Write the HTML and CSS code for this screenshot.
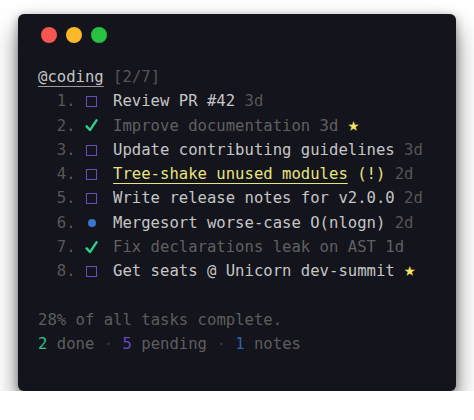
FILE: index.html
```html
<!DOCTYPE html>
<html>
<head>
<meta charset="utf-8">
<link rel="stylesheet" href="styles.css">
</head>
<body>
<div class="window">
  <div class="lights">
    <span class="light red"></span>
    <span class="light yellow"></span>
    <span class="light green"></span>
  </div>
  <div class="term">
    <div class="line"><span class="tag">@coding</span> <span class="dim">[2/7]</span></div>

    <div class="row"><span class="num">1.</span><span class="icon"><span class="box"></span></span><span class="text">Review PR #42 <span class="dim">3d</span></span></div>
    <div class="row done"><span class="num">2.</span><span class="icon"><svg class="check" viewBox="0 0 12 12"><path d="M1.5 6.8 L4.6 10.2 L10.6 1.2"/></svg></span><span class="text">Improve documentation 3d <span class="star">★</span></span></div>
    <div class="row"><span class="num">3.</span><span class="icon"><span class="box"></span></span><span class="text">Update contributing guidelines <span class="dim">3d</span></span></div>
    <div class="row"><span class="num">4.</span><span class="icon"><span class="box"></span></span><span class="text"><span class="hl"><span class="ul">Tree-shake unused modules</span> (!)</span> <span class="dim">2d</span></span></div>
    <div class="row"><span class="num">5.</span><span class="icon"><span class="box"></span></span><span class="text">Write release notes for v2.0.0 <span class="dim">2d</span></span></div>
    <div class="row"><span class="num">6.</span><span class="icon"><span class="dot"></span></span><span class="text">Mergesort worse-case O(nlogn) <span class="dim">2d</span></span></div>
    <div class="row done"><span class="num">7.</span><span class="icon"><svg class="check" viewBox="0 0 12 12"><path d="M1.5 6.8 L4.6 10.2 L10.6 1.2"/></svg></span><span class="text">Fix declarations leak on AST 1d</span></div>
    <div class="row"><span class="num">8.</span><span class="icon"><span class="box"></span></span><span class="text">Get seats @ Unicorn dev-summit <span class="star">★</span></span></div>

    <div class="line blank">&nbsp;</div>
    <div class="line muted">28% of all tasks complete.</div>
    <div class="line muted"><span class="c-green">2</span> done <span class="sep">·</span> <span class="c-purple">5</span> pending <span class="sep">·</span> <span class="c-blue">1</span> notes</div>
  </div>
</div>
</body>
</html>
```

FILE: styles.css
```css
* { box-sizing: border-box; }

html, body {
  margin: 0;
  padding: 0;
  background: #ffffff;
}

.window {
  margin: 14px 0 0 18px;
  width: 438px;
  height: 377px;
  background: #13141c;
  border-radius: 6px;
  box-shadow: 0 14px 24px rgba(0, 0, 0, 0.5), 0 2px 8px rgba(0, 0, 0, 0.3);
  padding: 13px 20px 0 20px;
}

.lights {
  display: flex;
  gap: 9px;
  height: 16px;
  padding-left: 3px;
}

.light {
  width: 16px;
  height: 16px;
  border-radius: 50%;
}
.light.red { background: #f5564f; }
.light.yellow { background: #fbb829; }
.light.green { background: #27c23f; }

.term {
  margin-top: 22px;
  font-family: "DejaVu Sans Mono", "Liberation Mono", monospace;
  font-size: 15.6px;
  line-height: 24.3px;
  color: #c6c6c6;
}

.line, .row {
  height: 24.3px;
  white-space: nowrap;
}

.row {
  display: flex;
  align-items: center;
}

.num {
  width: 4ch;
  text-align: right;
  color: #585858;
}

.icon {
  width: 2ch;
  margin-left: 1ch;
  margin-right: 1ch;
  display: flex;
  align-items: center;
  height: 24.3px;
}

.box {
  display: block;
  width: 11px;
  height: 11px;
  border: 1.5px solid #6a4cc0;
  margin-left: 1px;
}

.dot {
  display: block;
  width: 8px;
  height: 8px;
  border-radius: 50%;
  background: #3a76d0;
  margin-left: 3px;
}

.check {
  width: 13px;
  height: 13px;
  fill: none;
  stroke: #2fcf8c;
  stroke-width: 2.2;
  stroke-linecap: round;
  stroke-linejoin: round;
}

.text { color: #c6c6c6; white-space: pre; }

.done .text { color: #606060; }

.dim { color: #565656; }

.tag {
  text-decoration: underline;
  text-decoration-color: #9a9a9a;
  text-underline-offset: 4px;
  text-decoration-thickness: 1px;
}

.hl { color: #e9e47e; }

.ul {
  text-decoration: underline;
  text-decoration-color: #e9e47e;
  text-underline-offset: 4px;
  text-decoration-thickness: 1px;
}

.star {
  color: #f6e35e;
  font-size: 19px;
  line-height: 1;
}

.muted { color: #5e5e5e; }
.sep { color: #3a3a3e; }

.c-green { color: #2fc48a; }
.c-purple { color: #6a44c6; }
.c-blue { color: #2d62b2; }
```
